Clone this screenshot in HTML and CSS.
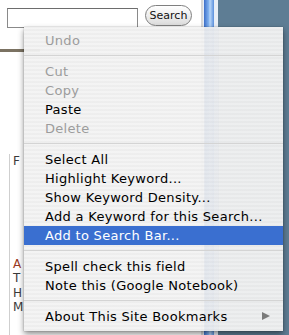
FILE: index.html
```html
<!DOCTYPE html>
<html>
<head>
<meta charset="utf-8">
<link rel="stylesheet" href="styles.css">
</head>
<body>
<div class="screen">
  <div class="page">
    <div class="search-row">
      <div class="search-input"></div>
      <div class="search-btn">Search</div>
    </div>
    <div class="rule"></div>
    <div class="sidebar">
      <div class="side-line">F</div>
      <div class="side-gap"></div>
      <div class="side-line red">A</div>
      <div class="side-line">T</div>
      <div class="side-line">H</div>
      <div class="side-line">M</div>
    </div>
  </div>
  <div class="scrollbar"><div class="thumb"></div></div>
  <div class="desktop"></div>

  <div class="menu">
    <div class="item disabled">Undo</div>
    <div class="sep"></div>
    <div class="item disabled">Cut</div>
    <div class="item disabled">Copy</div>
    <div class="item">Paste</div>
    <div class="item disabled">Delete</div>
    <div class="sep"></div>
    <div class="item">Select All</div>
    <div class="item">Highlight Keyword...</div>
    <div class="item">Show Keyword Density...</div>
    <div class="item">Add a Keyword for this Search...</div>
    <div class="item selected">Add to Search Bar...</div>
    <div class="sep"></div>
    <div class="item">Spell check this field</div>
    <div class="item">Note this (Google Notebook)</div>
    <div class="sep"></div>
    <div class="item submenu">About This Site Bookmarks<span class="arrow"></span></div>
  </div>
</div>
</body>
</html>
```

FILE: styles.css
```css
html, body {
  margin: 0;
  padding: 0;
}
body {
  width: 289px;
  height: 335px;
  overflow: hidden;
  background: #5e7d94;
  font-family: "DejaVu Sans", "Noto Sans", sans-serif;
}
.screen {
  position: relative;
  display: flex;
  width: 289px;
  height: 335px;
}
.page {
  width: 201px;
  height: 335px;
  background: #ffffff;
  display: flex;
  flex-direction: column;
  border-right: 2px solid #d8d8d8;
}
.search-row {
  display: flex;
  align-items: flex-start;
  gap: 7px;
  padding: 5px 0 0 7px;
}
.search-input {
  width: 129px;
  height: 18px;
  margin-top: 3px;
  border: 1px solid #8a8a8a;
  border-top-color: #6d6d6d;
  background: #fff;
}
.search-btn {
  width: 47px;
  height: 21px;
  box-sizing: border-box;
  border: 1px solid #7f7f7f;
  border-radius: 11px;
  background: linear-gradient(#ffffff, #ececec 55%, #dcdcdc);
  font-family: "DejaVu Sans", "Noto Sans", sans-serif;
  font-size: 11px;
  line-height: 19px;
  text-align: center;
  color: #111;
}
.rule {
  margin-top: 21px;
  height: 3px;
  width: 40px;
  background: #7b7262;
}
.sidebar {
  margin: 102px 0 0 9px;
  width: 13px;
  border-left: 1px solid #cfcfcf;
  padding-left: 3px;
  flex: 1;
  font-size: 12px;
  color: #3a3a3a;
}
.side-line {
  height: 14.5px;
  line-height: 14.5px;
  white-space: nowrap;
}
.side-gap {
  height: 88px;
}
.red {
  color: #9a3a22;
}
.scrollbar {
  width: 14px;
  height: 335px;
  background: #e8eef6;
  display: flex;
  padding-left: 1px;
}
.thumb {
  width: 10px;
  height: 335px;
  background: linear-gradient(90deg, #3c6fc8, #7fb0ee 45%, #b8d6f8 60%, #5a8fdc);
}
.desktop {
  flex: 1;
  background: #5e7d94;
}

.menu {
  position: absolute;
  left: 24px;
  top: 27px;
  width: 259px;
  padding: 4px 0 5px;
  background:
    linear-gradient(90deg, rgba(0,0,0,0) 180px, rgba(150,170,200,0.10) 181px, rgba(150,170,200,0.10) 194px, rgba(0,0,0,0) 195px),
    repeating-linear-gradient(180deg, rgba(243,243,243,0.96) 0, rgba(243,243,243,0.96) 2px, rgba(237,237,237,0.96) 2px, rgba(237,237,237,0.96) 4px);
  box-shadow: 0 3px 6px rgba(0,0,0,0.45), 0 0 1px rgba(0,0,0,0.35);
  font-size: 13px;
  letter-spacing: 0.3px;
  color: #000;
}
.item {
  height: 19px;
  line-height: 19px;
  padding-left: 21px;
  white-space: nowrap;
  position: relative;
}
.disabled {
  color: #9c9c9c;
}
.selected {
  background: #3a6fd0;
  color: #fff;
}
.sep {
  height: 12px;
  position: relative;
}
.sep::after {
  content: "";
  position: absolute;
  left: 0;
  right: 0;
  top: 5px;
  height: 1px;
  background: #d4d4d4;
}
.arrow {
  position: absolute;
  right: 13px;
  top: 5px;
  width: 0;
  height: 0;
  border-top: 4.5px solid transparent;
  border-bottom: 4.5px solid transparent;
  border-left: 8px solid #7a7a7a;
}
```
